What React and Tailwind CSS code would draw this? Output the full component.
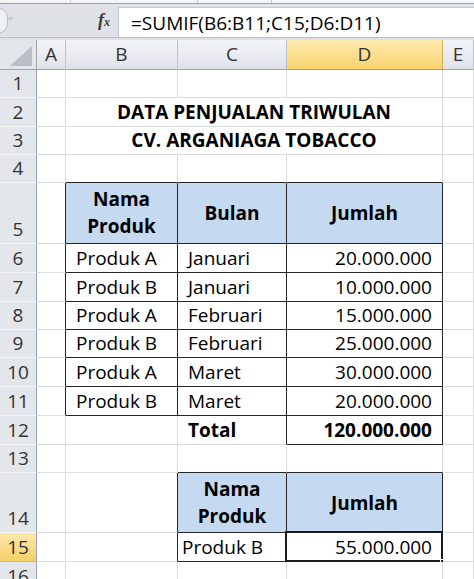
import React from "react";

const FONT = { fontFamily: '"Open Sans", "Noto Sans", sans-serif' };

const e = (o = {}) => ({ t: "", ...o });
const L = (t, o = {}) => ({ t, al: "l", ...o });
const R = (t, o = {}) => ({ t, al: "r", ...o });
const H = (t, o = {}) => ({ t, al: "c", hdr: true, r: 1, b: 1, ...o });

const data = [
  ["Produk A", "Januari", "20.000.000"],
  ["Produk B", "Januari", "10.000.000"],
  ["Produk A", "Februari", "15.000.000"],
  ["Produk B", "Februari", "25.000.000"],
  ["Produk A", "Maret", "30.000.000"],
  ["Produk B", "Maret", "20.000.000"],
];

const rows = [
  { n: 1, h: 28, cells: [e(), e(), e(), e(), e()] },
  { n: 2, h: 29, title: "DATA PENJUALAN TRIWULAN" },
  { n: 3, h: 28, title: "CV. ARGANIAGA TOBACCO" },
  { n: 4, h: 28, cells: [e(), e({ b: 1 }), e({ b: 1 }), e({ b: 1 }), e()] },
  {
    n: 5,
    h: 61,
    cells: [e({ r: 1 }), H(["Nama", "Produk"]), H("Bulan"), H("Jumlah"), e()],
  },
  ...data.map((d, i) => ({
    n: 6 + i,
    h: i === 2 || i === 3 ? 28 : 29,
    cells: [
      e({ r: 1 }),
      L(d[0], { r: 1, b: 1 }),
      L(d[1], { r: 1, b: 1 }),
      R(d[2], { r: 1, b: 1 }),
      e(),
    ],
  })),
  {
    n: 12,
    h: 29,
    cells: [e(), e(), L("Total", { bold: 1, r: 1 }), R("120.000.000", { bold: 1, r: 1, b: 1 }), e()],
  },
  { n: 13, h: 28, cells: [e(), e(), e({ b: 1 }), e({ b: 1 }), e()] },
  {
    n: 14,
    h: 60,
    cells: [e(), e({ r: 1 }), H(["Nama", "Produk"]), H("Jumlah"), e()],
  },
  {
    n: 15,
    h: 29,
    sel: true,
    cells: [e(), e({ r: 1 }), L("Produk B", { r: 1, b: 1, tight: 1 }), R("55.000.000", { r: 1, b: 1, sel: 1 }), e()],
  },
  { n: 16, h: 29, cells: [e(), e(), e(), e(), e()] },
];

function Cell({ c }) {
  const rc = c.r ? "border-r-[#262626]" : "border-r-[#dadcdd]";
  const bc = c.b ? "border-b-[#262626]" : "border-b-[#dadcdd]";
  const bg = c.hdr ? "bg-[#c5d9f1]" : "bg-white";
  const just = c.al === "r" ? "justify-end pr-[10px]" : c.al === "c" ? "justify-center" : c.tight ? "justify-start pl-[4px]" : "justify-start pl-[10px]";
  const valign = c.hdr ? "items-center" : "items-end pb-[1px]";
  const weight = c.bold || c.hdr ? "font-bold" : "font-normal";
  return (
    <div className={`relative flex border-r border-b ${rc} ${bc} ${bg} ${just} ${valign}`}>
      {Array.isArray(c.t) ? (
        <div className={`text-center leading-[27px] ${weight}`}>
          {c.t.map((s) => (
            <div key={s}>{s}</div>
          ))}
        </div>
      ) : (
        <span className={`leading-[26px] whitespace-nowrap ${weight}`}>{c.t}</span>
      )}
      {c.sel && (
        <>
          <div className="pointer-events-none absolute -left-[2px] -top-[2px] -right-[1px] -bottom-[1px] border-2 border-[#1b1b1b]" />
          <div className="absolute -right-[4px] -bottom-[4px] h-[6px] w-[6px] border border-white bg-[#1b1b1b]" />
        </>
      )}
    </div>
  );
}

function RowHeader({ n, sel }) {
  return (
    <div
      className={`flex items-end justify-center border-r border-b border-r-[#9da5b0] ${
        sel
          ? "bg-linear-to-b from-[#fde9ad] to-[#f7cf66] border-b-[#e3b95a]"
          : "bg-[#e3e6eb] border-b-[#f2f4f6]"
      } text-[#333] leading-[26px] pb-[1px]`}
    >
      {n}
    </div>
  );
}

export default function App() {
  return (
    <div className="h-[579px] w-[474px] overflow-hidden bg-white text-[19px] text-black" style={FONT}>
      {/* top strip */}
      <div className="flex h-[4px] border-b border-[#9aa1aa] bg-[#f3f4f6]">
        <div className="w-[71px] border-r border-[#c9ced5]" />
        <div className="w-[127px] border-r border-[#c9ced5]" />
        <div className="w-[74px] border-r border-[#c9ced5]" />
      </div>
      {/* formula bar */}
      <div className="flex h-[33px] bg-[#dfe3e8]">
        <div className="relative flex w-[118px] items-center justify-end pr-[8px]">
          <div className="absolute -left-[14px] top-[3px] h-[27px] w-[22px] rounded-full border border-[#b7bec7] bg-[#eef0f3]" />
          <div className="absolute left-[8px] top-[13px] h-[3px] w-[5px] rounded-sm bg-[#c3c8cf]" />
          <span
            className="text-[18px] font-bold italic text-[#3c3c3c]"
            style={{ fontFamily: '"Liberation Serif", serif' }}
          >
            f<span className="text-[12px]">x</span>
          </span>
        </div>
        <div className="mt-[3px] flex flex-1 items-center border-t border-l border-[#c5cad1] bg-white pl-[12px] leading-[26px]">
          =SUMIF(B6:B11;C15;D6:D11)
        </div>
      </div>
      <div className="h-[3px] border-t border-[#b9c0c9] bg-[#dde1e6]" />
      {/* sheet */}
      <div
        className="grid"
        style={{
          gridTemplateColumns: "37px 29px 112px 109px 156px 31px",
        }}
      >
        {/* column header row */}
        <div className="relative h-[30px] border-r border-b border-r-[#9da5b0] border-b-[#9da5b0] bg-[#e3e6eb]">
          <svg className="absolute right-[4px] bottom-[3px]" width="22" height="20" viewBox="0 0 22 20">
            <polygon points="22,0 22,20 0,20" fill="#b9bfc7" />
          </svg>
        </div>
        {["A", "B", "C"].map((l) => (
          <div
            key={l}
            className="flex h-[30px] items-center justify-center border-r border-b border-r-[#bcc3cc] border-b-[#9da5b0] bg-linear-to-b from-[#f2f4f7] to-[#dfe3e9] text-[#333]"
          >
            {l}
          </div>
        ))}
        <div className="flex h-[30px] items-center justify-center border-r border-b border-r-[#d6ae55] border-b-[#c99a3a] bg-linear-to-b from-[#fdeaaf] to-[#f8d36c] text-[#333]">
          D
        </div>
        <div className="flex h-[30px] items-center justify-center border-r border-b border-r-[#bcc3cc] border-b-[#9da5b0] bg-linear-to-b from-[#f2f4f7] to-[#dfe3e9] text-[#333]">
          E
        </div>

        {rows.map((row) => (
          <React.Fragment key={row.n}>
            <div style={{ height: row.h }} className="contents" />
            <RowHeader n={row.n} sel={row.sel} />
            {row.title ? (
              <>
                <div className="border-r border-b border-r-[#dadcdd] border-b-[#dadcdd]" style={{ height: row.h }} />
                <div className="col-span-3 flex items-end justify-center border-r border-b border-r-[#dadcdd] border-b-[#dadcdd] pb-[1px]">
                  <span className="whitespace-nowrap font-bold leading-[26px]">{row.title}</span>
                </div>
                <div className="border-r border-b border-r-[#dadcdd] border-b-[#dadcdd]" />
              </>
            ) : (
              row.cells.map((c, i) => (
                <div key={i} className="grid" style={{ height: row.h }}>
                  <Cell c={c} />
                </div>
              ))
            )}
          </React.Fragment>
        ))}
      </div>
    </div>
  );
}
